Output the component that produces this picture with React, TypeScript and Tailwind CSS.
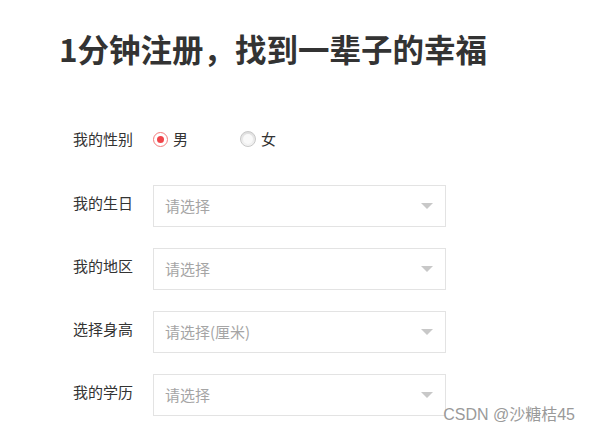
import { useState } from "react";

const FONT = "font-['Microsoft_YaHei','Noto_Sans_CJK_SC',sans-serif]";

const selects = [
    { label: "我的生日", placeholder: "请选择" },
    { label: "我的地区", placeholder: "请选择" },
    { label: "选择身高", placeholder: "请选择(厘米)" },
    { label: "我的学历", placeholder: "请选择" },
];

const Radio = ({ checked, label, onClick }: { checked: boolean; label: string; onClick: () => void }) => (
    <button type="button" onClick={onClick} className="flex items-center gap-[5px] cursor-pointer">
        {checked ? (
            <span className="w-[15px] h-[15px] rounded-full border border-[#f47b7b] bg-white flex items-center justify-center">
                <span className="w-[7px] h-[7px] rounded-full bg-[#f0454a]" />
            </span>
        ) : (
            <span className="w-[16px] h-[16px] rounded-full border border-[#c8c8c8] bg-gradient-to-b from-[#dedede] to-[#f4f4f4] flex items-center justify-center">
                <span className="w-[10px] h-[10px] rounded-full bg-[#f9f9f9]" />
            </span>
        )}
        <span className="text-[15px] leading-5 text-[#333]">{label}</span>
    </button>
);

export default function App() {
    const [gender, setGender] = useState("male");

    return (
        <div className={`relative w-[591px] h-[435px] bg-white overflow-hidden ${FONT}`}>
            <h1 className="pl-[59px] pt-[28px] text-[31.5px] leading-[40px] font-bold text-[#333]">
                1分钟注册，找到一辈子的幸福
            </h1>

            <div className="pl-[73px] pt-[61px] flex flex-col">
                <div className="flex items-center h-5">
                    <span className="w-[80px] text-[15px] leading-5 text-[#333]">我的性别</span>
                    <div className="flex items-center gap-[52px]">
                        <Radio checked={gender === "male"} label="男" onClick={() => setGender("male")} />
                        <Radio checked={gender === "female"} label="女" onClick={() => setGender("female")} />
                    </div>
                </div>

                <div className="mt-[36px] flex flex-col gap-[21px]">
                    {selects.map((s) => (
                        <div key={s.label} className="flex items-start">
                            <span className="w-[80px] pt-[8px] text-[15px] leading-5 text-[#333]">{s.label}</span>
                            <div className="w-[293px] h-[42px] border border-[#e3e3e3] bg-white flex items-center justify-between pl-[11px] pr-[12px]">
                                <span className="text-[15px] leading-5 text-[#a5a5a5]">{s.placeholder}</span>
                                <span className="w-0 h-0 border-l-[6px] border-r-[6px] border-t-[6px] border-l-transparent border-r-transparent border-t-[#c8c8c8]" />
                            </div>
                        </div>
                    ))}
                </div>
            </div>

            <div className="absolute right-[16px] bottom-[10px] text-[16px] leading-5 text-[#9a9a9a] font-['Liberation_Sans','Noto_Sans_CJK_SC',sans-serif]">
                CSDN @沙糖桔45
            </div>
        </div>
    );
}
